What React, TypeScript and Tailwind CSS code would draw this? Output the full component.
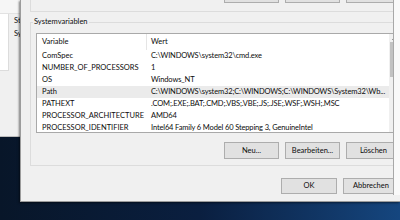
type Row = {
  name: string;
  value: string;
  selected?: boolean;
};

const rows: Row[] = [
  { name: "ComSpec", value: "C:\\WINDOWS\\system32\\cmd.exe" },
  { name: "NUMBER_OF_PROCESSORS", value: "1" },
  { name: "OS", value: "Windows_NT" },
  {
    name: "Path",
    value: "C:\\WINDOWS\\system32;C:\\WINDOWS;C:\\WINDOWS\\System32\\Wb...",
    selected: true,
  },
  { name: "PATHEXT", value: ".COM;.EXE;.BAT;.CMD;.VBS;.VBE;.JS;.JSE;.WSF;.WSH;.MSC" },
  { name: "PROCESSOR_ARCHITECTURE", value: "AMD64" },
  { name: "PROCESSOR_IDENTIFIER", value: "Intel64 Family 6 Model 60 Stepping 3, GenuineIntel" },
];

function Button({ label, className }: { label: string; className: string }) {
  return (
    <div
      className={`flex shrink-0 items-center justify-center border border-[#adadad] bg-[#e1e1e1] ${className}`}
    >
      {label}
    </div>
  );
}

function BackWindow() {
  return (
    <div className="flex h-[137px] w-[20px] shrink-0 flex-col overflow-hidden border-b border-[#bdbdbd] bg-[#f0f0f0]">
      <div className="h-[14px] shrink-0 border-b border-[#e2e2e2] bg-[#f6f6f6]" />
      <div className="flex h-[57px] shrink-0">
        <div className="w-[9px] shrink-0 border-r border-b border-[#dcdcdc] bg-white" />
        <div className="flex w-[6px] flex-col overflow-hidden whitespace-nowrap pl-[5px] box-content">
          <div className="flex h-[13px] w-[6px] items-center overflow-hidden">St</div>
          <div className="flex h-[13px] w-[6px] items-center overflow-hidden">Sy</div>
        </div>
      </div>
    </div>
  );
}

function VariableList() {
  return (
    <div className="flex h-[100px] w-[365px] overflow-hidden border border-[#a9a9a9] bg-white">
      <div className="flex min-w-0 flex-1 flex-col">
        <div className="flex h-[16px] shrink-0">
          <div className="flex w-[110px] shrink-0 items-center border-r border-[#e5e5e5] pl-[5px]">
            Variable
          </div>
          <div className="flex items-center pl-[4px]">Wert</div>
        </div>
        {rows.map((row) => (
          <div
            key={row.name}
            className={`flex h-[12px] shrink-0 items-center ${row.selected ? "bg-[#ebebeb]" : ""}`}
          >
            <div className="w-[110px] shrink-0 overflow-hidden whitespace-nowrap pl-[5px]">
              {row.name}
            </div>
            <div className="min-w-0 flex-1 overflow-hidden whitespace-nowrap pl-[4px] tracking-[-0.14px]">
              {row.value}
            </div>
          </div>
        ))}
      </div>
      <div className="flex w-[11px] shrink-0 flex-col bg-[#f0f0f0]">
        <div className="flex h-[8px] items-center justify-center">
          <svg width="5" height="3" viewBox="0 0 5 3">
            <path d="M0 3 L2.5 0 L5 3 Z" fill="#606060" />
          </svg>
        </div>
        <div className="mx-[1px] h-[35px] bg-[#c2c2c2]" />
      </div>
    </div>
  );
}

function Dialog() {
  return (
    <div className="relative h-[202px] w-[380px] shrink-0 overflow-hidden border-b border-l border-[#9c9c9c] bg-[#f0f0f0] shadow-[-1px_1px_2px_rgba(0,0,0,0.5)]">
      {/* bottom of the Benutzervariablen group */}
      <div className="ml-[9px] flex h-[12px] w-[377px] justify-end border-b border-l border-[#dcdcdc] pr-[6px]">
        <div className="-mt-[13px] flex gap-[6px]">
          <Button label="Neu..." className="h-[16px] w-[55px]" />
          <Button label="Bearbeiten..." className="h-[16px] w-[55px]" />
          <Button label="Löschen" className="h-[16px] w-[55px]" />
        </div>
      </div>

      <div className="ml-[9px] mt-[4px] w-[377px]">
        <div className="flex h-[12px]">
          <div className="mt-[6px] w-[3px] border-l border-t border-[#dcdcdc]" />
          <span className="flex items-center px-[1px]">Systemvariablen</span>
          <div className="mt-[6px] flex-1 border-r border-t border-[#dcdcdc]" />
        </div>
        <div className="border-x border-b border-[#dcdcdc] px-[5px] pb-[6px] pt-[5px]">
          <VariableList />
          <div className="mt-[9px] flex justify-end gap-[6px]">
            <Button label="Neu..." className="h-[17px] w-[55px]" />
            <Button label="Bearbeiten..." className="h-[17px] w-[55px]" />
            <Button label="Löschen" className="h-[17px] w-[55px]" />
          </div>
        </div>
      </div>

      <div className="ml-[9px] mt-[12px] flex w-[377px] justify-end gap-[6px] pr-[8px]">
        <Button label="OK" className="h-[16px] w-[56px]" />
        <Button label="Abbrechen" className="h-[16px] w-[56px]" />
      </div>

      {/* window lying on top at the right edge */}
      <div className="absolute right-0 top-0 h-[195px] w-[7px] border-l border-[#a8a8a8] bg-[#f9f9f9]" />
    </div>
  );
}

export default function App() {
  return (
    <div className="flex h-[220px] w-[400px] items-start overflow-hidden bg-linear-to-r from-[#081629] via-[#0a1f40] to-[#15467f] font-['Lato','Liberation_Sans',sans-serif] text-[7.5px] leading-[10px] text-[#0c0c0c]">
      <BackWindow />
      <Dialog />
    </div>
  );
}
